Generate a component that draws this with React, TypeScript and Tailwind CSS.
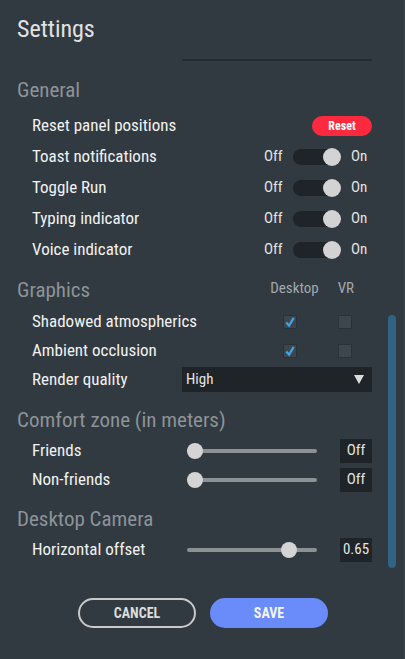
import React from "react";

const FONT = { fontFamily: '"Liberation Sans Narrow", "Roboto Condensed", Roboto, sans-serif' };

function Toggle() {
  return (
    <div className="flex items-center">
      <span className="w-[29px] text-[15px] text-[#e4e4e4]">Off</span>
      <div className="relative h-[16px] w-[48px] rounded-full bg-[#1f2428]">
        <div className="absolute right-0 top-[-1px] h-[18px] w-[18px] rounded-full bg-[#d3d3d3]" />
      </div>
      <span className="ml-[10px] w-[21px] text-[15px] text-[#e4e4e4]">On</span>
    </div>
  );
}

function Check({ on }: { on: boolean }) {
  return (
    <div className="flex h-[14px] w-[14px] items-center justify-center border border-[#2a3137] bg-[#3e464d]">
      {on && (
        <svg viewBox="0 0 13 13" className="h-[12px] w-[12px]">
          <path d="M2.5 7 L5.5 10.5 L10.5 2" fill="none" stroke="#3ca6e8" strokeWidth="2.4" />
        </svg>
      )}
    </div>
  );
}

function Slider({ pos, value }: { pos: number; value: string }) {
  return (
    <div className="flex items-center">
      <div className="relative ml-[5px] h-[4px] w-[130px] rounded-full bg-[#8c9194]">
        <div
          className="absolute top-[-6px] h-[16px] w-[16px] -translate-x-1/2 rounded-full bg-[#d4d4d4]"
          style={{ left: `${pos}px` }}
        />
      </div>
      <div className="ml-[23px] flex h-[24px] w-[32px] items-center justify-center bg-[#1f2428] text-[15px] text-[#e4e4e4]">
        {value}
      </div>
    </div>
  );
}

function Row({ label, h, children }: { label: string; h: string; children?: React.ReactNode }) {
  return (
    <div className={`flex ${h} items-center pl-[32px] pr-[33px]`}>
      <span className="flex-1 whitespace-nowrap text-[17px] text-[#f2f2f2]">{label}</span>
      <div className="flex items-center justify-end">{children}</div>
    </div>
  );
}

function Heading({ children, className = "" }: { children: React.ReactNode; className?: string }) {
  return (
    <div className={`flex h-[30px] items-center pl-[17px] pr-[33px] text-[21px] text-[#8d9398] ${className}`}>
      {children}
    </div>
  );
}

export default function App() {
  return (
    <div className="relative h-[659px] w-[405px] overflow-hidden bg-[#313a41]" style={FONT}>
      <div className="flex h-[58px] items-center pl-[17px] text-[24px] text-[#e2e2e2]">Settings</div>
      <div className="ml-[182px] mt-[1px] h-[2px] w-[190px] bg-[#252c31]" />

      <Heading className="mt-[15px]">General</Heading>
      <div className="mt-[4px]">
        <div className="flex h-[31px] items-center pl-[32px] pr-[33px]">
          <span className="whitespace-nowrap text-[17px] text-[#f2f2f2]">Reset panel positions</span>
          <div className="flex-1" />
          <button className="flex h-[20px] w-[60px] items-center justify-center rounded-full bg-[#fd2a3f] text-[12px] font-bold text-white">
            Reset
          </button>
        </div>
        <Row label="Toast notifications" h="h-[31px]"><Toggle /></Row>
        <Row label="Toggle Run" h="h-[31px]"><Toggle /></Row>
        <Row label="Typing indicator" h="h-[31px]"><Toggle /></Row>
        <Row label="Voice indicator" h="h-[31px]"><Toggle /></Row>
      </div>

      <Heading className="mt-[11px]">
        <span className="flex-1">Graphics</span>
        <span className="mb-[6px] text-[15px] text-[#a3a8ac]">Desktop</span>
        <span className="mb-[6px] ml-[19px] mr-[18px] text-[15px] text-[#a3a8ac]">VR</span>
      </Heading>
      <div className="mt-[1px]">
        <Row label="Shadowed atmospherics" h="h-[29px]">
          <Check on />
          <div className="ml-[41px] mr-[20px]"><Check on={false} /></div>
        </Row>
        <Row label="Ambient occlusion" h="h-[29px]">
          <Check on />
          <div className="ml-[41px] mr-[20px]"><Check on={false} /></div>
        </Row>
        <Row label="Render quality" h="h-[29px]">
          <div className="flex h-[25px] w-[190px] items-center justify-between bg-[#1f2428] pl-[4px] pr-[8px] text-[15px] text-[#e4e4e4]">
            <span>High</span>
            <svg viewBox="0 0 10 9" className="h-[9px] w-[10px]">
              <path d="M0 0 H10 L5 9 Z" fill="#dcdcdc" />
            </svg>
          </div>
        </Row>
      </div>

      <Heading className="mt-[12px]">Comfort zone (in meters)</Heading>
      <div>
        <Row label="Friends" h="h-[29px]"><Slider pos={8} value="Off" /></Row>
        <Row label="Non-friends" h="h-[29px]"><Slider pos={8} value="Off" /></Row>
      </div>

      <Heading className="mt-[11px]">Desktop Camera</Heading>
      <Row label="Horizontal offset" h="h-[29px]"><Slider pos={102} value="0.65" /></Row>

      <div className="mt-[34px] flex justify-center gap-[14px] pl-[1px]">
        <button className="flex h-[30px] w-[118px] items-center justify-center rounded-full border-2 border-[#c9c9c9] text-[14px] font-bold text-[#dcdcdc]">
          CANCEL
        </button>
        <button className="flex h-[30px] w-[118px] items-center justify-center rounded-full bg-[#6a8cfa] text-[14px] font-bold text-[#f4f4f4]">
          SAVE
        </button>
      </div>

      <div className="absolute left-[388px] top-[315px] h-[253px] w-[8px] rounded-sm bg-[#2f6283]" />
      <div className="absolute right-0 top-0 h-full w-[2px] bg-[#363f46]" />
    </div>
  );
}
